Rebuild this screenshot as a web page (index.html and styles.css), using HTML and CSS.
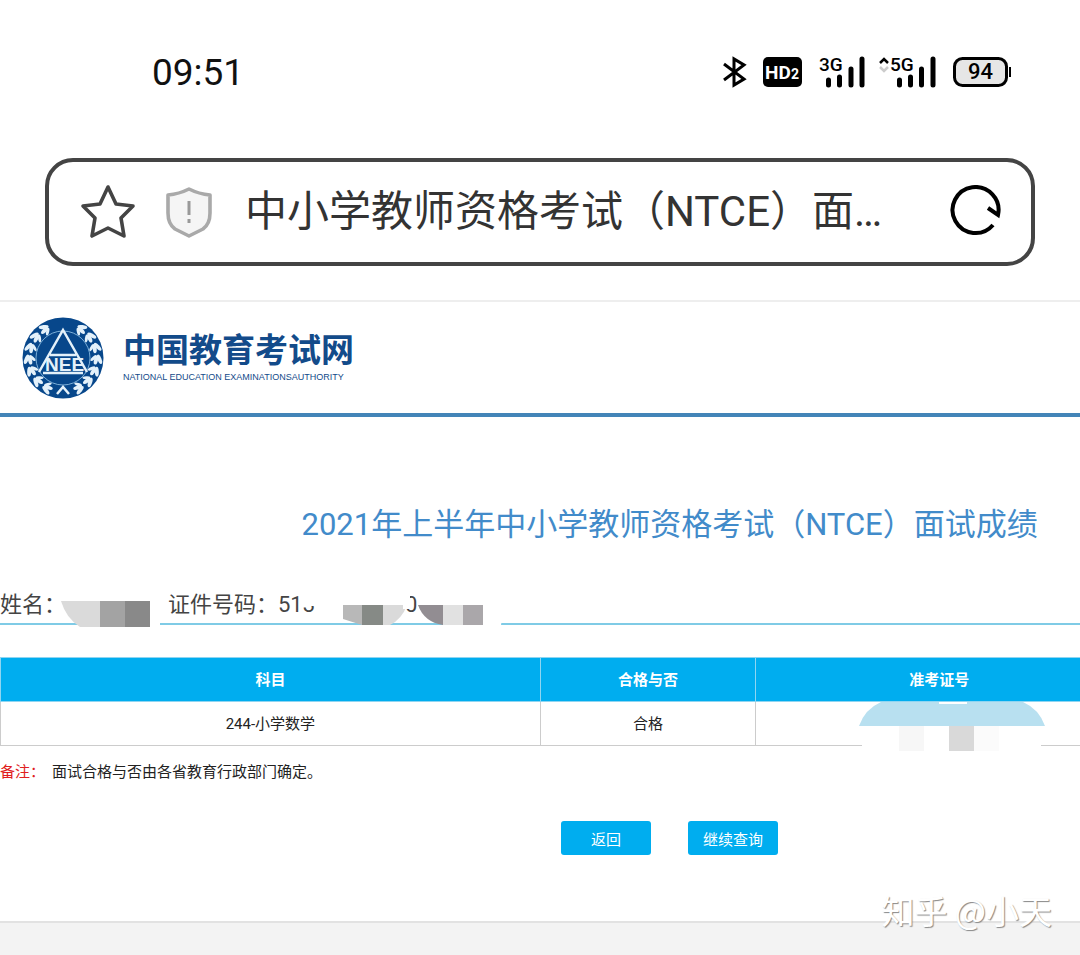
FILE: index.html
```html
<!DOCTYPE html>
<html lang="zh-CN">
<head>
  <meta charset="utf-8">
  <meta name="viewport" content="width=device-width, initial-scale=1">
  <title>中小学教师资格考试（NTCE）面试成绩</title>
  <link rel="stylesheet" href="styles.css">
</head>
<body>
  <div class="status">
    <span class="time">09:51</span>
    <svg class="status-icons" width="290" height="36" viewBox="0 0 290 36">
      <!-- bluetooth -->
      <path d="M3 10L23 25L13 31V5L23 11L3 26" fill="none" stroke="#000" stroke-width="3"/>
      <!-- hd -->
      <rect x="42" y="3" width="39" height="30" rx="5"/>
      <text class="hd" x="44" y="25">HD</text>
      <text class="hd-small" x="70" y="25">2</text>
      <!-- signals -->
      <text class="net" x="98" y="17">3G</text>
      <path d="M107.500 26v5M118.500 23v8M130 15v16M141 5v26" stroke="#000" stroke-width="5" stroke-linecap="round"/>
      <path d="M159 9l4-4 4 4" fill="none" stroke="#000" stroke-width="2.500"/>
      <path d="M159 13l4 4 4-4" fill="none" stroke="#ccc" stroke-width="2.500"/>
      <text class="net" x="169" y="17">5G</text>
      <path d="M178.500 26v5M189.500 23v8M200.500 15v16M212 5v26" stroke="#000" stroke-width="5" stroke-linecap="round"/>
      <!-- battery -->
      <rect x="233.500" y="4.500" width="52" height="27" rx="8" fill="#e6e6e6" stroke="#000" stroke-width="3"/>
      <text class="battery" x="247" y="25">94</text>
      <path d="M289 13v10" stroke="#000" stroke-width="2"/>
    </svg>
  </div>

  <form class="address">
    <button type="button" class="icon" aria-label="收藏">
      <svg width="56" height="56" viewBox="0 0 56 56" fill="none" stroke="#444" stroke-width="3.600" stroke-linejoin="round">
        <path d="M28 3l8 17 17 2-12 12 3 18-16-8-16 8 3-18L3 22l17-2z"/>
      </svg>
    </button>
    <svg class="shield" width="48" height="52" viewBox="0 0 48 52">
      <path d="M24 3Q34 8 45 9V27Q45 38 38 43L24 50L10 43Q3 38 3 27V9Q14 8 24 3z" fill="#f5f5f5" stroke="#a9a9a9" stroke-width="3.600" stroke-linejoin="round"/>
      <path d="M24 15v14M24 33v4" stroke="#999" stroke-width="3"/>
    </svg>
    <input type="text" aria-label="地址" value="中小学教师资格考试（NTCE）面…">
    <button type="button" class="icon" aria-label="刷新">
      <svg width="52" height="54" viewBox="0 0 52 54" fill="none" stroke="#000" stroke-width="4">
        <path d="M43 40A23 23 0 1 1 48 30L38 23"/>
      </svg>
    </button>
  </form>

  <header>
    <svg width="82" height="82" viewBox="0 0 82 82">
      <defs>
        <g id="leaf" fill="#e4f1fa">
          <ellipse cx="36.500" cy="0" rx="2" ry="5" transform="rotate(-24 36.500 0)"/>
          <ellipse cx="33" cy="1" rx="2" ry="4.500" transform="rotate(12 33 1)"/>
          <ellipse cx="30.500" cy="-1" rx="1.500" ry="4" transform="rotate(45 30.500 -1)"/>
        </g>
        <g id="branch">
          <use href="#leaf" transform="rotate(-58)"/>
          <use href="#leaf" transform="rotate(-38)"/>
          <use href="#leaf" transform="rotate(-18)"/>
          <use href="#leaf" transform="rotate(2)"/>
          <use href="#leaf" transform="rotate(22)"/>
          <use href="#leaf" transform="rotate(42)"/>
          <use href="#leaf" transform="rotate(62)"/>
        </g>
      </defs>
      <circle cx="41" cy="41" r="40.500" fill="#07478b"/>
      <use href="#branch" transform="translate(41 41)"/>
      <use href="#branch" transform="translate(41 41) scale(-1 1)"/>
      <circle cx="41" cy="41" r="27" fill="#07478b" stroke="#7db0d8"/>
      <path d="M17 55L41 13L65 55M28 38H54M21 56H61M35 77l6-7 6 7" fill="none" stroke="#e4f1fa" stroke-width="2.500"/>
      <text class="nee" x="23" y="54">NEE</text>
    </svg>
    <div class="brand">
      <strong>中国教育考试网</strong>
      <small>NATIONAL EDUCATION EXAMINATIONSAUTHORITY</small>
    </div>
  </header>

  <main>
    <h1>2021年上半年中小学教师资格考试（NTCE）面试成绩</h1>

    <div class="person">
      <span class="name">姓名：</span>
      <span class="number">证件号码：513</span>
      <span class="digit">0</span>
      <svg class="mosaic" width="510" height="48" viewBox="0 0 510 48">
        <path d="M150 30h10v18h-10zM80 36h76v12H80zM483 30h19l-3 18h-16zM303 0h18v17h-18z" fill="#fff"/>
        <path d="M61 12h39v26H80Q66 29 61 12z" fill="#dadada"/>
        <path d="M100 12h25v26h-25z" fill="#a3a3a3"/>
        <path d="M125 12h25v26h-25z" fill="#898989"/>
        <path d="M343 16h19v20l-19-6z" fill="#b8b8b8"/>
        <path d="M362 16h21v20h-21z" fill="#868a86"/>
        <path d="M383 16h24Q402 30 390 36h-7z" fill="#dadada"/>
        <path d="M403 0h7v20h-7z" fill="#fff"/>
        <path d="M418 16h25v20Q424 33 418 16z" fill="#928d92"/>
        <path d="M443 16h20v20h-20z" fill="#e1e1e1"/>
        <path d="M463 16h20v20h-20z" fill="#aaa7aa"/>
      </svg>
    </div>

    <table>
      <thead>
        <tr>
          <th class="subject">科目</th>
          <th class="result">合格与否</th>
          <th>准考证号</th>
        </tr>
      </thead>
      <tbody>
        <tr>
          <td>244-小学数学</td>
          <td>合格</td>
          <td class="ticket">
            <svg class="mosaic" width="186" height="50" viewBox="0 0 186 50">
              <path d="M3 24h179v26H3z" fill="#fff"/>
              <path d="M0 24Q6 7 22 0H164Q180 7 186 24z" fill="#b8e0f0"/>
              <path d="M80 1h28" stroke="#fff" stroke-width="2"/>
              <path d="M40 24h25v25H40z" fill="#f7f7f7"/>
              <path d="M90 24h25v25H90z" fill="#d9d9d9"/>
              <path d="M115 24h25v25h-25z" fill="#fbfbfb"/>
            </svg>
          </td>
        </tr>
      </tbody>
    </table>

    <p class="note"><span>备注：</span>面试合格与否由各省教育行政部门确定。</p>

    <div class="actions">
      <button type="button">返回</button>
      <button type="button">继续查询</button>
    </div>
  </main>

  <footer></footer>
  <div class="watermark">知乎 @小天</div>
</body>
</html>
```
FILE: styles.css
```css
* {
  box-sizing: border-box;
}
body {
  position: relative;
  margin: 0;
  min-height: 100vh;
  display: flex;
  flex-direction: column;
  background: #fff;
  color: #333;
  font-family: Roboto, "Noto Sans CJK SC", sans-serif;
}
button {
  padding: 0;
  border: 0;
  font-family: inherit;
}
svg {
  display: block;
  flex: none;
}
.status {
  display: flex;
  align-items: center;
  justify-content: space-between;
  height: 144px;
  padding: 0 69px 0 152px;
}
.time {
  color: #111;
  font-size: 37px;
}
.hd {
  fill: #fff;
  font-size: 19px;
  font-weight: bold;
}
.hd-small {
  fill: #fff;
  font-size: 14px;
  font-weight: bold;
}
.net {
  font-size: 19px;
  font-weight: 500;
}
.battery {
  font-size: 22px;
  font-weight: 500;
}
.address {
  display: flex;
  align-items: center;
  height: 108px;
  margin: 14px 45px 34px;
  padding: 0 29px 0 31px;
  border: 4px solid #444;
  border-radius: 28px;
}
.icon {
  background: none;
}
.shield {
  margin: 0 32px 0 29px;
}
.address input {
  flex: 1;
  min-width: 0;
  padding: 0;
  border: 0;
  outline: 0;
  background: none;
  color: #333;
  font: 42px/60px Roboto, "Noto Sans CJK SC", sans-serif;
}
header {
  display: flex;
  align-items: center;
  gap: 19px;
  height: 117px;
  padding-left: 22px;
  border-top: 2px solid #eee;
  border-bottom: 4px solid #4385b8;
}
.brand {
  display: flex;
  flex-direction: column;
  padding-top: 3px;
  color: #134b8a;
}
.brand strong {
  font-size: 33px;
  line-height: 36px;
}
.brand small {
  font: 9px/16px "Liberation Sans", sans-serif;
}
.nee {
  fill: #e4f1fa;
  font: bold 19px "Liberation Sans", sans-serif;
}
/* the desktop page is wider than the phone's window */
main {
  overflow: hidden;
}
h1, .actions {
  width: 124%;
}
h1 {
  margin: 84px 0 40px;
  color: #428bca;
  font-size: 31px;
  font-weight: normal;
  line-height: 48px;
  text-align: center;
}
.person {
  position: relative;
  display: flex;
  height: 36px;
  border-bottom: 2px solid #7fcbe6;
  color: #444;
  font-size: 22px;
  line-height: 32px;
}
.name {
  width: 168px;
}
.number {
  width: 237px;
}
.person .mosaic {
  position: absolute;
  top: 0;
  left: 0;
}
table {
  width: 104%;
  margin-top: 32px;
  border-collapse: collapse;
  table-layout: fixed;
  font-size: 15px;
  line-height: 22px;
}
th, td {
  height: 44px;
  padding: 0;
  border: 1px solid #ccc;
  text-align: center;
}
th {
  border-color: #8fd5f1;
  background: #00adef;
  color: #fff;
}
td {
  color: #222;
}
.subject {
  width: 48.1%;
}
.result {
  width: 19.2%;
}
.ticket {
  position: relative;
}
.ticket .mosaic {
  position: absolute;
  top: 0;
  left: 103px;
}
.note {
  margin: 14px 0 37px;
  color: #222;
  font-size: 15px;
  line-height: 24px;
}
.note span {
  display: inline-block;
  width: 52px;
  color: #e02020;
}
.actions {
  display: flex;
  justify-content: center;
  gap: 37px;
}
.actions button {
  width: 90px;
  height: 34px;
  border-radius: 3px;
  background: #00adef;
  color: #fff;
  font-size: 15px;
}
footer {
  flex: 1;
  min-height: 34px;
  margin-top: 66px;
  border-top: 2px solid #e2e2e2;
  background: #f3f3f3;
}
.watermark {
  position: absolute;
  right: 28px;
  bottom: 21px;
  color: #fff;
  font: 33px/48px "Noto Sans CJK SC", sans-serif;
  text-shadow: 1px 1px 1px #888;
}
```
